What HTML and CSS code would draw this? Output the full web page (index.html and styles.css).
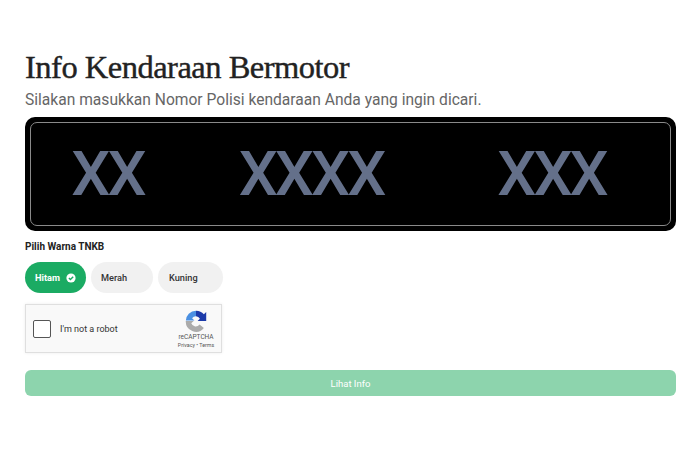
FILE: index.html
```html
<!DOCTYPE html>
<html lang="id">
<head>
    <meta charset="UTF-8">
    <meta name="viewport" content="width=device-width, initial-scale=1.0">
    <title>Info Kendaraan Bermotor</title>
    <link rel="stylesheet" href="styles.css">
</head>
<body>

    <div class="container">
        <h1>Info Kendaraan Bermotor</h1>
        <p class="subtitle">Silakan masukkan Nomor Polisi kendaraan Anda yang ingin dicari.</p>

        <div class="plate">
            <div class="plate-inner">
                <span class="plate-part">XX</span>
                <span class="plate-part">XXXX</span>
                <span class="plate-part">XXX</span>
            </div>
        </div>

        <div class="color-label">Pilih Warna TNKB</div>
        <div class="pills">
            <div class="pill pill-active">
                Hitam
                <svg class="pill-check" viewBox="0 0 10 10" width="10" height="10">
                    <circle cx="5" cy="5" r="4.6" fill="#fff"/>
                    <path d="M2.9 5.1 L4.4 6.6 L7.2 3.7" fill="none" stroke="#1bab63" stroke-width="1.4"/>
                </svg>
            </div>
            <div class="pill pill-merah">Merah</div>
            <div class="pill pill-kuning">Kuning</div>
        </div>

        <div class="captcha">
            <div class="captcha-box"></div>
            <div class="captcha-text">I'm not a robot</div>
            <div class="captcha-brand">
                <svg class="captcha-logo" viewBox="0 0 28 28" width="22" height="22">
                    <path d="M14 1 L14 8 A6 6 0 0 0 9 10.5 L12 13.5 L1 13.5 L1 14 A13 13 0 0 1 14 1 Z" fill="#4a90e2"/>
                    <path d="M14 1 A13 13 0 0 1 24 5.5 L27 2.5 L27 14 L16 14 L19 11 A6 6 0 0 0 14 8 Z" fill="#1c3aa9"/>
                    <path d="M1 14 L11 14 L8 17 A6 6 0 0 0 18.5 18.5 L24 23 A13 13 0 0 1 1 14 Z" fill="#ababab"/>
                </svg>
                <div class="captcha-name">reCAPTCHA</div>
                <div class="captcha-links">Privacy • Terms</div>
            </div>
        </div>

        <button class="submit" disabled>Lihat Info</button>
    </div>

</body>
</html>
```

FILE: styles.css
```css
body {
    font-family: Roboto, 'Liberation Sans', sans-serif;
    margin: 0;
    padding: 0;
    background-color: #fff;
    color: #222;
}
.container {
    padding: 48px 24px 0 25px;
}
h1 {
    font-family: 'Liberation Serif', serif;
    font-weight: normal;
    font-size: 32.5px;
    line-height: 38px;
    letter-spacing: -0.5px;
    margin: 0;
    color: #222;
    -webkit-text-stroke: 0.4px #222;
}
.subtitle {
    font-size: 15.6px;
    line-height: 20px;
    margin: 4px 0 0;
    color: #666;
}
.plate {
    background-color: #000;
    border-radius: 10px;
    padding: 5px;
    margin-top: 7px;
    height: 114px;
    box-sizing: border-box;
}
.plate-inner {
    display: grid;
    grid-template-columns: 158px 249px 1fr;
    align-items: center;
    height: 100%;
    box-sizing: border-box;
    border: 1px solid #8a8a8a;
    border-radius: 7px;
}
.plate-part {
    font-size: 62px;
    font-weight: 500;
    line-height: 60px;
    letter-spacing: -3px;
    text-align: center;
    padding-right: 5px;
    color: #64708a;
}
.color-label {
    font-size: 10px;
    font-weight: bold;
    line-height: 14px;
    margin-top: 9px;
    color: #222;
}
.pills {
    display: flex;
    gap: 5px;
    margin-top: 8px;
}
.pill {
    display: flex;
    align-items: center;
    gap: 6px;
    height: 31px;
    box-sizing: border-box;
    padding-left: 10px;
    border-radius: 16px;
    background-color: #f1f1f1;
    font-size: 9.2px;
    font-weight: 500;
    color: #333;
}
.pill-active {
    width: 61px;
    background-color: #1bab63;
    color: #fff;
    font-weight: bold;
}
.pill-merah {
    width: 62px;
}
.pill-kuning {
    width: 65px;
    padding-left: 11px;
}
.captcha {
    display: flex;
    align-items: center;
    width: 197px;
    height: 49px;
    box-sizing: border-box;
    margin-top: 11px;
    padding: 0 1px 0 7px;
    background-color: #f9f9f9;
    border: 1px solid #dfdfdf;
    box-shadow: 0 0 3px rgba(0, 0, 0, 0.08);
}
.captcha-box {
    width: 18px;
    height: 18px;
    box-sizing: border-box;
    background-color: #fff;
    border: 1.5px solid #555;
    border-radius: 2px;
}
.captcha-text {
    font-size: 9px;
    color: #333;
    margin-left: 9px;
}
.captcha-brand {
    margin-left: auto;
    display: flex;
    flex-direction: column;
    align-items: center;
    width: 48px;
}
.captcha-logo {
    display: block;
    margin-top: 2px;
}
.captcha-name {
    font-size: 6.5px;
    line-height: 8px;
    margin-top: 1px;
    color: #555;
}
.captcha-links {
    font-size: 5.3px;
    line-height: 8px;
    color: #555;
}
.submit {
    display: block;
    width: 100%;
    height: 26px;
    margin-top: 17px;
    border: none;
    border-radius: 6px;
    background-color: #8dd4ad;
    color: #fff;
    font-family: Roboto, 'Liberation Sans', sans-serif;
    font-size: 9.5px;
}
```
